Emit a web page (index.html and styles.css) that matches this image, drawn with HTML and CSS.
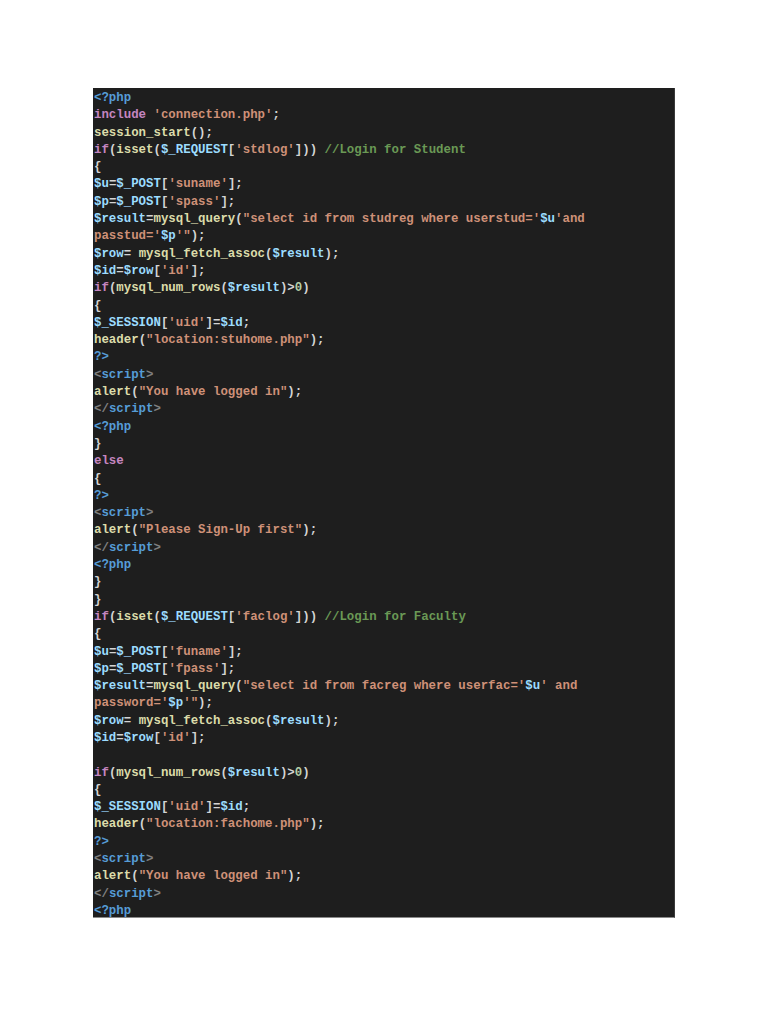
FILE: index.html
```html
<!DOCTYPE html>
<html>
<head>
<meta charset="utf-8">
<link rel="stylesheet" href="styles.css">
</head>
<body>
<pre class="code"><span class="t">&lt;?php</span>
<span class="k">include</span> <span class="s">'connection.php'</span>;
<span class="f">session_start</span>();
<span class="k">if</span>(<span class="f">isset</span>(<span class="v">$_REQUEST</span>[<span class="s">'stdlog'</span>])) <span class="c">//Login for Student</span>
{
<span class="v">$u</span>=<span class="v">$_POST</span>[<span class="s">'suname'</span>];
<span class="v">$p</span>=<span class="v">$_POST</span>[<span class="s">'spass'</span>];
<span class="v">$result</span>=<span class="f">mysql_query</span>(<span class="s">"select id from studreg where userstud='<span class="v">$u</span>'and</span>
<span class="s">passtud='<span class="v">$p</span>'"</span>);
<span class="v">$row</span>= <span class="f">mysql_fetch_assoc</span>(<span class="v">$result</span>);
<span class="v">$id</span>=<span class="v">$row</span>[<span class="s">'id'</span>];
<span class="k">if</span>(<span class="f">mysql_num_rows</span>(<span class="v">$result</span>)&gt;<span class="n">0</span>)
{
<span class="v">$_SESSION</span>[<span class="s">'uid'</span>]=<span class="v">$id</span>;
<span class="f">header</span>(<span class="s">"location:stuhome.php"</span>);
<span class="t">?&gt;</span>
<span class="g">&lt;</span><span class="t">script</span><span class="g">&gt;</span>
<span class="f">alert</span>(<span class="s">"You have logged in"</span>);
<span class="g">&lt;/</span><span class="t">script</span><span class="g">&gt;</span>
<span class="t">&lt;?php</span>
}
<span class="k">else</span>
{
<span class="t">?&gt;</span>
<span class="g">&lt;</span><span class="t">script</span><span class="g">&gt;</span>
<span class="f">alert</span>(<span class="s">"Please Sign-Up first"</span>);
<span class="g">&lt;/</span><span class="t">script</span><span class="g">&gt;</span>
<span class="t">&lt;?php</span>
}
}
<span class="k">if</span>(<span class="f">isset</span>(<span class="v">$_REQUEST</span>[<span class="s">'faclog'</span>])) <span class="c">//Login for Faculty</span>
{
<span class="v">$u</span>=<span class="v">$_POST</span>[<span class="s">'funame'</span>];
<span class="v">$p</span>=<span class="v">$_POST</span>[<span class="s">'fpass'</span>];
<span class="v">$result</span>=<span class="f">mysql_query</span>(<span class="s">"select id from facreg where userfac='<span class="v">$u</span>' and</span>
<span class="s">password='<span class="v">$p</span>'"</span>);
<span class="v">$row</span>= <span class="f">mysql_fetch_assoc</span>(<span class="v">$result</span>);
<span class="v">$id</span>=<span class="v">$row</span>[<span class="s">'id'</span>];

<span class="k">if</span>(<span class="f">mysql_num_rows</span>(<span class="v">$result</span>)&gt;<span class="n">0</span>)
{
<span class="v">$_SESSION</span>[<span class="s">'uid'</span>]=<span class="v">$id</span>;
<span class="f">header</span>(<span class="s">"location:fachome.php"</span>);
<span class="t">?&gt;</span>
<span class="g">&lt;</span><span class="t">script</span><span class="g">&gt;</span>
<span class="f">alert</span>(<span class="s">"You have logged in"</span>);
<span class="g">&lt;/</span><span class="t">script</span><span class="g">&gt;</span>
<span class="t">&lt;?php</span></pre>
</body>
</html>
```

FILE: styles.css
```css
html, body {
  margin: 0;
  padding: 0;
  background: #ffffff;
}

body {
  padding: 88px 0 0 93px;
}

.code {
  margin: 0;
  width: 582px;
  height: 830px;
  box-sizing: border-box;
  padding: 2px 0 0 1px;
  background: #1e1e1e;
  border-right: 1px solid #3a3a3a;
  border-bottom: 1px solid #8a8a8a;
  color: #d4d4d4;
  font-family: "Liberation Mono", "DejaVu Sans Mono", monospace;
  font-size: 12.4px;
  font-weight: bold;
  line-height: 17.3px;
  white-space: pre;
  overflow: hidden;
}

.k { color: #c586c0; }
.t { color: #569cd6; }
.f { color: #dcdcaa; }
.v { color: #9cdcfe; }
.s { color: #ce9178; }
.s .v { color: #9cdcfe; }
.c { color: #6a9955; }
.n { color: #b5cea8; }
.g { color: #808080; }
```
